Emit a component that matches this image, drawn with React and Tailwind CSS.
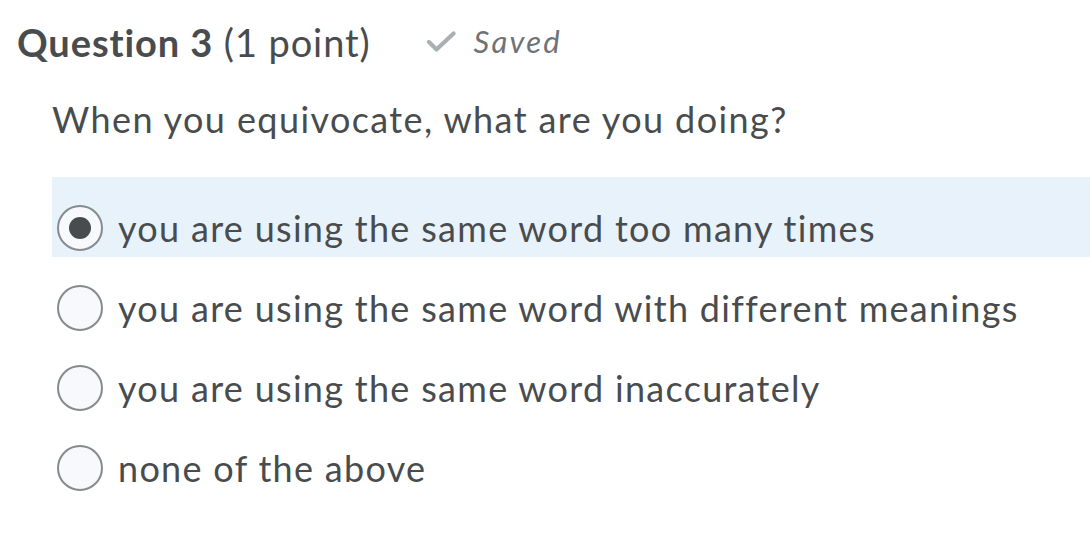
import React, { useState } from 'react';

const options = [
  'you are using the same word too many times',
  'you are using the same word with different meanings',
  'you are using the same word inaccurately',
  'none of the above',
];

function Radio({ checked }) {
  return (
    <span className="flex items-center justify-center w-[46px] h-[46px] rounded-full border-2 border-[#868b8e] bg-[#f8f9fc] shrink-0">
      {checked && <span className="w-[22px] h-[22px] rounded-full bg-[#494c4e]" />}
    </span>
  );
}

export default function App() {
  const [selected, setSelected] = useState(0);

  return (
    <div className="w-[1090px] h-[536px] bg-white text-[#494c4e] font-['Lato','Noto_Sans',sans-serif] [font-variant-ligatures:none] overflow-hidden">
      <div className="flex items-end pl-[17px] pt-[23px]">
        <h2 className="text-[38px] leading-none tracking-[0.9px]">
          <span className="font-bold">Question 3</span> <span>(1 point)</span>
        </h2>
        <div className="flex items-center ml-[55px] mb-[4px] gap-[18px] text-[#6e7376]">
          <svg width="30" height="22" viewBox="0 0 30 22" fill="none">
            <path d="M3 11l7.5 7.5L27.5 2.5" stroke="#a9b0b3" strokeWidth="4.2" strokeLinecap="round" strokeLinejoin="round" />
          </svg>
          <span className="italic text-[31px] leading-none tracking-[2.2px]">Saved</span>
        </div>
      </div>

      <div className="pl-[52px] mt-[40px] text-[36px] leading-none tracking-[1.4px]">When you equivocate, what are you doing?</div>

      <div className="mt-[40px] pl-[52px]">
        {options.map((opt, i) => (
          <label
            key={opt}
            onClick={() => setSelected(i)}
            className={`flex items-center gap-[15px] h-[80px] pt-[22px] pl-[5px] cursor-pointer ${selected === i ? 'bg-[#e8f2fb]' : ''}`}
          >
            <Radio checked={selected === i} />
            <span className="text-[36px] leading-none tracking-[1.3px]">{opt}</span>
          </label>
        ))}
      </div>
    </div>
  );
}
